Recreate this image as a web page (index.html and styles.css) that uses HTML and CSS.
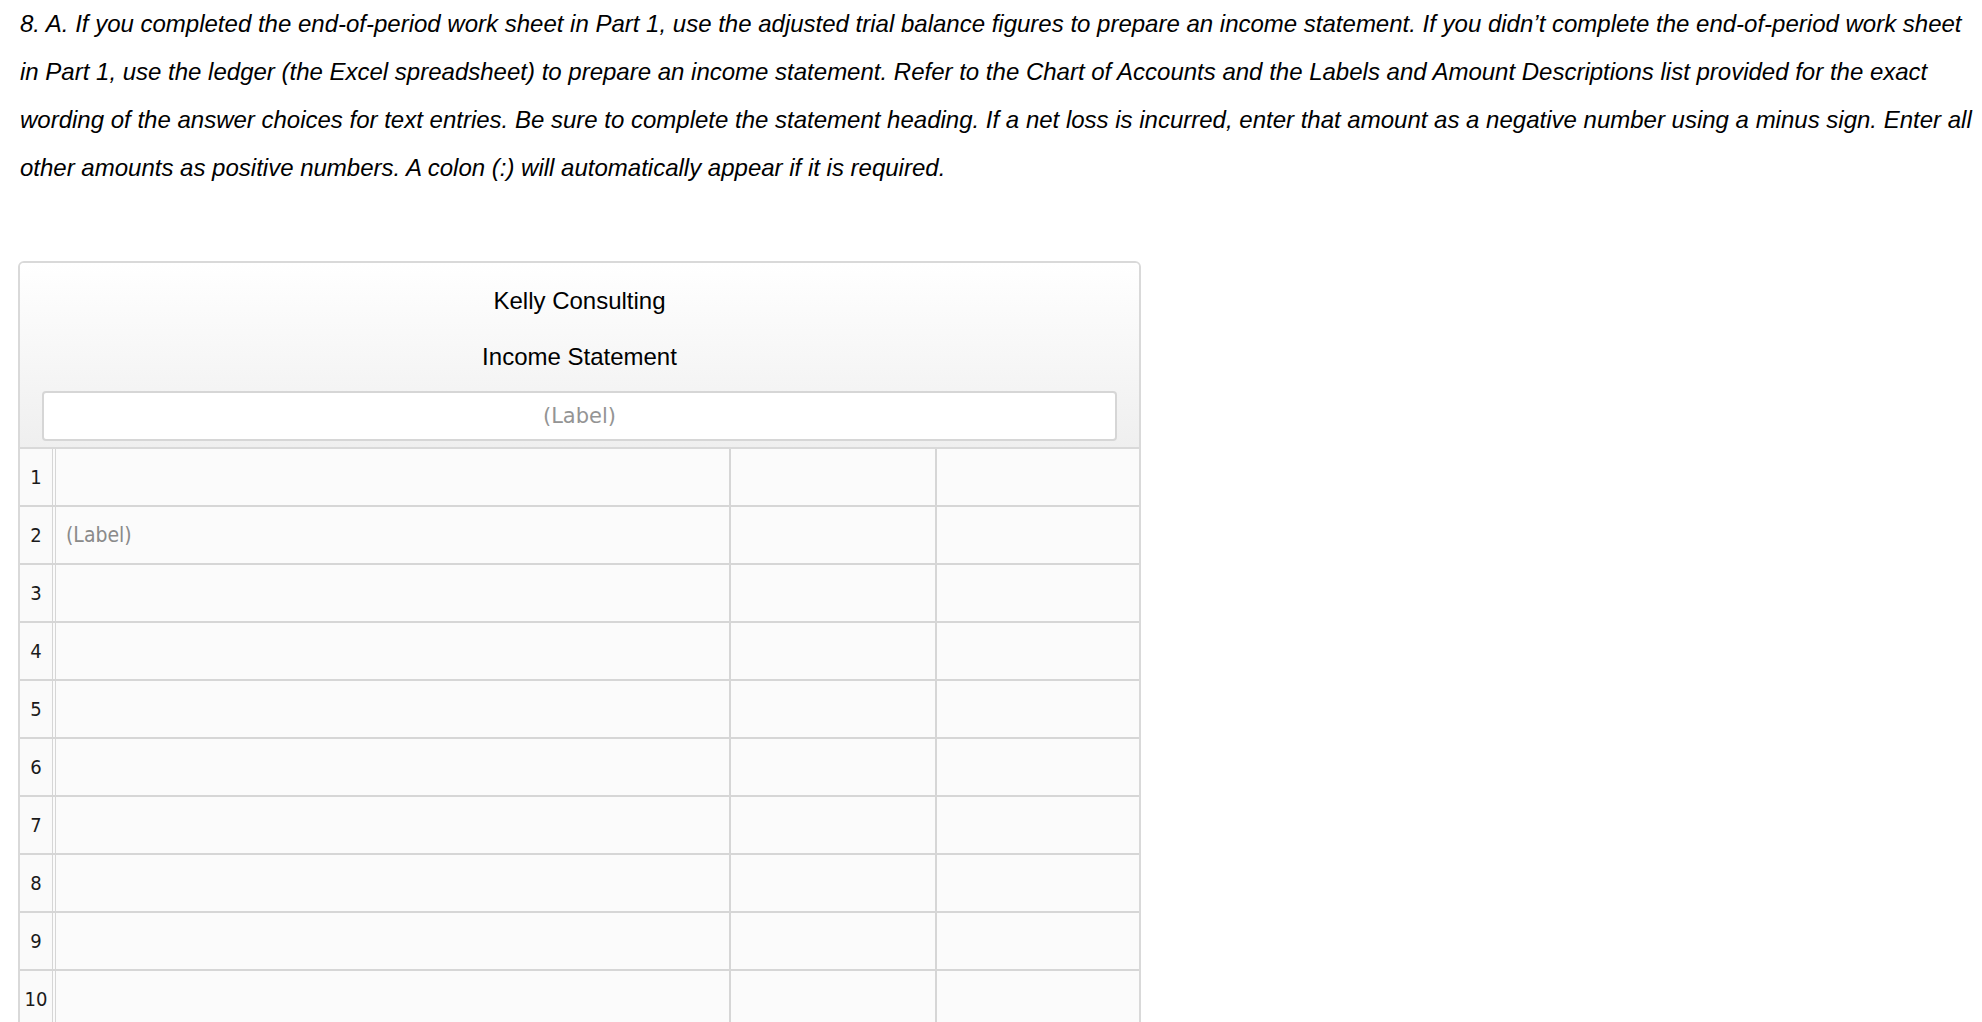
FILE: index.html
```html
<!DOCTYPE html>
<html>
<head>
  <title>Income Statement</title>
  <link rel="stylesheet" href="styles.css">
</head>
<body>
  <p class="prompt">8. A. If you completed the end-of-period work sheet in Part 1, use the adjusted trial balance figures to prepare an income statement. If you didn’t complete the end-of-period work sheet in Part 1, use the ledger (the Excel spreadsheet) to prepare an income statement. Refer to the Chart of Accounts and the Labels and Amount Descriptions list provided for the exact wording of the answer choices for text entries. Be sure to complete the statement heading. If a net loss is incurred, enter that amount as a negative number using a minus sign. Enter all other amounts as positive numbers. A colon (:) will automatically appear if it is required.</p>

  <div class="statement">
    <div class="statement-head">
      <div class="head-line">Kelly Consulting</div>
      <div class="head-line">Income Statement</div>
      <div class="head-input">(Label)</div>
    </div>

    <div class="statement-body">
      <div class="row"><div class="num">1</div><div class="cell"></div><div class="cell amt"></div><div class="cell amt"></div></div>
      <div class="row"><div class="num">2</div><div class="cell placeholder">(Label)</div><div class="cell amt"></div><div class="cell amt"></div></div>
      <div class="row"><div class="num">3</div><div class="cell"></div><div class="cell amt"></div><div class="cell amt"></div></div>
      <div class="row"><div class="num">4</div><div class="cell"></div><div class="cell amt"></div><div class="cell amt"></div></div>
      <div class="row"><div class="num">5</div><div class="cell"></div><div class="cell amt"></div><div class="cell amt"></div></div>
      <div class="row"><div class="num">6</div><div class="cell"></div><div class="cell amt"></div><div class="cell amt"></div></div>
      <div class="row"><div class="num">7</div><div class="cell"></div><div class="cell amt"></div><div class="cell amt"></div></div>
      <div class="row"><div class="num">8</div><div class="cell"></div><div class="cell amt"></div><div class="cell amt"></div></div>
      <div class="row"><div class="num">9</div><div class="cell"></div><div class="cell amt"></div><div class="cell amt"></div></div>
      <div class="row"><div class="num">10</div><div class="cell"></div><div class="cell amt"></div><div class="cell amt"></div></div>
    </div>
  </div>
</body>
</html>
```

FILE: styles.css
```css
body {
  margin: 0;
  padding: 0 0 0 18px;
  background-color: #fff;
  color: #000;
  font-family: "Liberation Sans", Arial, sans-serif;
}

/* question text above the worksheet */
.prompt {
  margin: 0 0 69px 0;
  padding-left: 2px;
  font-size: 24px;
  font-style: italic;
  line-height: 48px;
}

.statement {
  width: 1119px;
  border: 2px solid #d9d9d9;
  border-radius: 6px 6px 0 0;
  overflow: hidden;
}

.statement-head {
  padding: 10px 22px 6px 22px;
  background: linear-gradient(#ffffff, #efefef);
  border-bottom: 2px solid #d9d9d9;
}
.head-line {
  height: 56px;
  line-height: 56px;
  text-align: center;
  font-size: 24px;
}
.head-input {
  margin-top: 6px;
  height: 46px;
  line-height: 46px;
  border: 2px solid #d6d6d6;
  border-radius: 4px;
  background-color: #fff;
  text-align: center;
  color: #949494;
  font-family: "DejaVu Sans", Verdana, sans-serif;
  font-size: 21px;
}

/* numbered entry rows */
.row {
  display: grid;
  grid-template-columns: 32px 677px 206px 1fr;
  height: 56px;
  border-bottom: 2px solid #d6d6d6;
  background-color: #fbfbfb;
}
.num {
  line-height: 56px;
  text-align: center;
  font-family: "Liberation Sans Narrow", "DejaVu Sans Condensed", "Liberation Sans", sans-serif;
  font-stretch: condensed;
  font-size: 20px;
  color: #1a1a1a;
  background-color: #fafafa;
}
.cell {
  border-left: 4px double #d6d6d6;
  line-height: 56px;
  padding-left: 10px;
  font-family: "Liberation Sans Narrow", "DejaVu Sans Condensed", "Liberation Sans", sans-serif;
  font-stretch: condensed;
  font-size: 21px;
}
.cell.amt {
  border-left: 2px solid #d6d6d6;
}
.placeholder {
  color: #8a8a8a;
}
```
